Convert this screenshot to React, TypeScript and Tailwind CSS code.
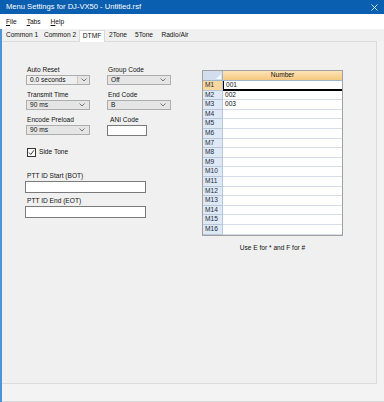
import React from "react";

const font = { fontFamily: '"Liberation Sans", Arial, sans-serif' };

function Chevron() {
  return (
    <svg width="6" height="4" viewBox="0 0 6 4" className="shrink-0">
      <polyline points="0.5,0.5 3,3 5.5,0.5" fill="none" stroke="#555" strokeWidth="0.8" />
    </svg>
  );
}

function Select({ value, editable = false }: { value: string; editable?: boolean }) {
  if (editable) {
    return (
      <div className="flex h-[10px] w-[64px] items-stretch border border-[#adadad] bg-[#e5e5e5]">
        <div className="flex flex-1 items-center border-r border-[#c8c8c8] bg-[#eeeeee] pl-[3px] leading-none">
          {value}
        </div>
        <div className="flex w-[11px] items-center justify-center">
          <Chevron />
        </div>
      </div>
    );
  }
  return (
    <div className="flex h-[10px] w-[64px] items-center justify-between border border-[#adadad] bg-[#e5e5e5] pl-[3px] pr-[4px] leading-none">
      <span>{value}</span>
      <Chevron />
    </div>
  );
}

function Field({ label, children }: { label: string; children: React.ReactNode }) {
  return (
    <div className="flex flex-col">
      <div className="h-[10px] pl-[1px] leading-[10px]">{label}</div>
      {children}
    </div>
  );
}

const rows = Array.from({ length: 16 }, (_, i) => ({
  name: `M${i + 1}`,
  value: i < 3 ? String(i + 1).padStart(3, "0") : "",
}));

function Grid() {
  return (
    <div className="flex w-[141px] flex-col border border-[#a0a0a0] bg-white">
      <div className="flex h-[10px]">
        <div className="relative w-[20px] border-r border-b border-[#9eb6ce] bg-[#d2deee]">
          <svg width="5" height="5" viewBox="0 0 5 5" className="absolute bottom-[1px] right-[1px]">
            <polygon points="5,0 5,5 0,5" fill="#fff" opacity="0.8" />
          </svg>
        </div>
        <div className="flex flex-1 items-center justify-center border-b border-[#9eb6ce] bg-gradient-to-b from-[#fde4b6] to-[#f6c87f] leading-none">
          Number
        </div>
      </div>
      {rows.map((r, i) => (
        <div key={r.name} className="flex h-[9.6px]">
          <div
            className={`flex w-[20px] items-center border-r border-b border-[#b7c7da] pl-[2px] leading-none text-[#1e2b3c] ${
              i === 0 ? "bg-[#f9d8a0]" : "bg-[#dfe8f5]"
            }`}
          >
            {r.name}
          </div>
          <div
            className={`flex flex-1 items-center pl-[2px] leading-none ${
              i === 0 ? "border-b-2 border-l border-black" : "border-b border-[#d5dde8]"
            }`}
          >
            {r.value}
          </div>
        </div>
      ))}
    </div>
  );
}

export default function App() {
  const tabs = [
    { name: "Common 1", w: "w-[38px]" },
    { name: "Common 2", w: "w-[38px]" },
    { name: "DTMF", w: "w-[26px]", active: true },
    { name: "2Tone", w: "w-[26px]" },
    { name: "5Tone", w: "w-[26px]" },
    { name: "Radio/Air", w: "w-[36px]" },
  ];
  return (
    <div className="flex h-[402px] w-[384px] flex-col overflow-hidden bg-[#f3f3f3] text-[6.6px] text-[#111]" style={font}>
      <div className="flex h-[14px] shrink-0 items-center justify-between bg-[#0b5fb0] pl-[6px] pr-[6px] text-[7.6px] text-white">
        <span>Menu Settings for DJ-VX50 - Untitled.rsf</span>
        <svg width="7" height="7" viewBox="0 0 7 7">
          <path d="M0.5 0.5 L6.5 6.5 M6.5 0.5 L0.5 6.5" stroke="#fff" strokeWidth="0.8" />
        </svg>
      </div>
      <div className="flex h-[15px] shrink-0 items-center gap-[10px] bg-white pl-[6px] pt-[1px]">
        <span><u>F</u>ile</span>
        <span><u>T</u>abs</span>
        <span><u>H</u>elp</span>
      </div>
      <div className="flex flex-1 flex-col border-l-2 border-[#4f92d6]">
        <div className="flex h-[12px] shrink-0 items-end bg-[#f0f0f0] pl-[1px]">
          {tabs.map((t) => (
            <div
              key={t.name}
              className={`flex items-center justify-center leading-none ${t.w} ${
                t.active
                  ? "relative z-10 h-[12px] -mb-[1px] border border-b-0 border-[#d9d9d9] bg-white"
                  : "h-[11px]"
              }`}
            >
              {t.name}
            </div>
          ))}
        </div>
        <div className="flex h-[343px] w-[375px] shrink-0 border-t border-r border-b border-[#dcdcdc] bg-[#f0f0f0] pl-[24px] pt-[23px]">
          <div className="flex w-[176px] flex-col">
            <div className="grid grid-cols-[64px_64px] gap-x-[17px] gap-y-[5px]">
              <Field label="Auto Reset">
                <Select value="0.0 seconds" editable />
              </Field>
              <Field label="Group Code">
                <Select value="Off" />
              </Field>
              <Field label="Transmit Time">
                <Select value="90 ms" />
              </Field>
              <Field label="End Code">
                <Select value="B" />
              </Field>
              <Field label="Encode Preload">
                <Select value="90 ms" />
              </Field>
              <div className="flex flex-col">
                <div className="h-[10px] pl-[3px] leading-[10px]">ANI Code</div>
                <div className="h-[11px] w-[40px] border border-[#7a7a7a] bg-white" />
              </div>
            </div>
            <div className="mt-[12px] flex items-center gap-[3px] pl-[1px]">
              <div className="flex h-[9px] w-[9px] items-center justify-center border border-[#333] bg-white">
                <svg width="7" height="7" viewBox="0 0 7 7">
                  <polyline points="1,3.5 2.8,5.5 6,1.2" fill="none" stroke="#222" strokeWidth="0.9" />
                </svg>
              </div>
              <span className="leading-none">Side Tone</span>
            </div>
            <div className="mt-[14px] flex flex-col">
              <div className="h-[10px] pl-[1px] leading-[10px]">PTT ID Start (BOT)</div>
              <div className="-ml-[1px] h-[12px] w-[121px] border border-[#7a7a7a] bg-white" />
            </div>
            <div className="mt-[3px] flex flex-col">
              <div className="h-[10px] pl-[1px] leading-[10px]">PTT ID End (EOT)</div>
              <div className="-ml-[1px] h-[12px] w-[121px] border border-[#7a7a7a] bg-white" />
            </div>
          </div>
          <div className="mt-[5px] flex flex-col items-center">
            <Grid />
            <div className="mt-[7px] leading-[10px]">Use E for * and F for #</div>
          </div>
        </div>
        <div className="flex-1" />
        <div className="h-[1px] w-full bg-[#d9d9d9]" />
      </div>
    </div>
  );
}
